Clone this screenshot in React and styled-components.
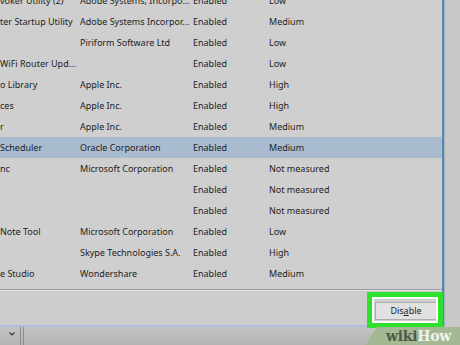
import React from 'react'
import styled, { createGlobalStyle } from 'styled-components';

const GlobalStyle = createGlobalStyle`
  html, body {
    margin: 0;
    padding: 0;
    background: #c8c8c8;
  }
`

const Screen = styled.div`
  position: relative;
  width: 460px;
  height: 345px;
  overflow: hidden;
  display: grid;
  grid-template-rows: 327px 18px;
  background: #c8c8c8;
  font-family: "Noto Sans", "Open Sans", sans-serif;
  color: #1e1e1e;
`

const Window = styled.div`
  width: 442px;
  display: flex;
  flex-direction: column;
  background: #cfcfcf;
  border-right: 2px solid #5f86a9;
  border-bottom: 2px solid #a9c2da;
  box-shadow: 1px 0 0 #9fb3c4;
`

const List = styled.div`
  height: 289px;
  overflow: hidden;
`

const Rows = styled.div`
  margin-top: -10px;
`

const Row = styled.div`
  display: grid;
  grid-template-columns: 80px 113px 76px 1fr;
  align-items: center;
  height: 21px;
  font-size: 9px;
  background: ${p => (p.$selected ? '#a8bbcf' : 'transparent')};
`

const Cell = styled.span`
  white-space: nowrap;
  overflow: hidden;
`

const Footer = styled.div`
  height: 34px;
  display: flex;
  justify-content: flex-end;
  align-items: flex-start;
  padding: 7px 5px 0 0;
  box-sizing: border-box;
  border-top: 1px solid #9d9d9d;
  box-shadow: inset 0 1px 0 #e2e2e2;
  background: #cdcdcd;
`

const ButtonWrap = styled.div`
  position: relative;

  &::after {
    content: '';
    position: absolute;
    top: -5px;
    left: -8px;
    right: -6px;
    bottom: -8px;
    border: 5px solid #2fe12f;
    box-shadow: inset 0 0 0 2px #ffffff;
  }
`

const Button = styled.button`
  width: 62px;
  height: 18px;
  padding: 0;
  background: #e1e1e1;
  border: 1px solid #adadad;
  font-family: "Noto Sans", "Open Sans", sans-serif;
  font-size: 9px;
  color: #1e1e1e;

  u {
    text-decoration: underline;
  }
`

const Taskbar = styled.div`
  display: flex;
  align-items: stretch;
  background: linear-gradient(#c3c3c3, #b4b4b4);
`

const Chevron = styled.div`
  display: flex;
  align-items: center;
  padding: 0 5px 4px 9px;
`

const Divider = styled.div`
  width: 1px;
  margin-left: ${p => p.$gap}px;
  background: #8a8a8a;
`

const Watermark = styled.div`
  position: absolute;
  right: 0;
  bottom: 0;
  width: 95px;
  height: 18px;
  padding-left: 21px;
  box-sizing: border-box;
  background: #a3b893;
  clip-path: polygon(12px 0, 100% 0, 100% 100%, 0 100%);
  font-family: "DejaVu Serif", "Liberation Serif", serif;
  font-weight: bold;
  font-size: 14px;
  line-height: 18px;
  letter-spacing: -0.3px;
`

const Wiki = styled.span`
  color: #4f5a47;
`

const How = styled.span`
  color: #eef2ea;
`

const rows = [
  ['voker Utility (2)', 'Adobe Systems, Incorpo...', 'Enabled', 'Low'],
  ['ter Startup Utility', 'Adobe Systems Incorpor...', 'Enabled', 'Medium'],
  ['', 'Piriform Software Ltd', 'Enabled', 'Low'],
  ['WiFi Router Upd...', '', 'Enabled', 'Low'],
  ['o Library', 'Apple Inc.', 'Enabled', 'High'],
  ['ces', 'Apple Inc.', 'Enabled', 'High'],
  ['r', 'Apple Inc.', 'Enabled', 'Medium'],
  ['Scheduler', 'Oracle Corporation', 'Enabled', 'Medium', true],
  ['nc', 'Microsoft Corporation', 'Enabled', 'Not measured'],
  ['', '', 'Enabled', 'Not measured'],
  ['', '', 'Enabled', 'Not measured'],
  ['Note Tool', 'Microsoft Corporation', 'Enabled', 'Low'],
  ['', 'Skype Technologies S.A.', 'Enabled', 'High'],
  ['e Studio', 'Wondershare', 'Enabled', 'Medium'],
]

export default function App() {
  return (
    <>
      <GlobalStyle />
      <Screen>
        <Window>
          <List>
            <Rows>
              {rows.map(([name, publisher, status, impact, selected], i) => (
                <Row key={i} $selected={selected}>
                  <Cell>{name}</Cell>
                  <Cell>{publisher}</Cell>
                  <Cell>{status}</Cell>
                  <Cell>{impact}</Cell>
                </Row>
              ))}
            </Rows>
          </List>
          <Footer>
            <ButtonWrap>
              <Button>Dis<u>a</u>ble</Button>
            </ButtonWrap>
          </Footer>
        </Window>
        <Taskbar>
          <Chevron>
            <svg width="6" height="4" viewBox="0 0 6 4">
              <path d="M0.5 0.5 L3 3 L5.5 0.5" fill="none" stroke="#333" strokeWidth="1.2" />
            </svg>
          </Chevron>
          <Divider $gap={0} />
          <Divider $gap={2} />
        </Taskbar>
        <Watermark>
          <Wiki>wiki</Wiki><How>How</How>
        </Watermark>
      </Screen>
    </>
  )
}
